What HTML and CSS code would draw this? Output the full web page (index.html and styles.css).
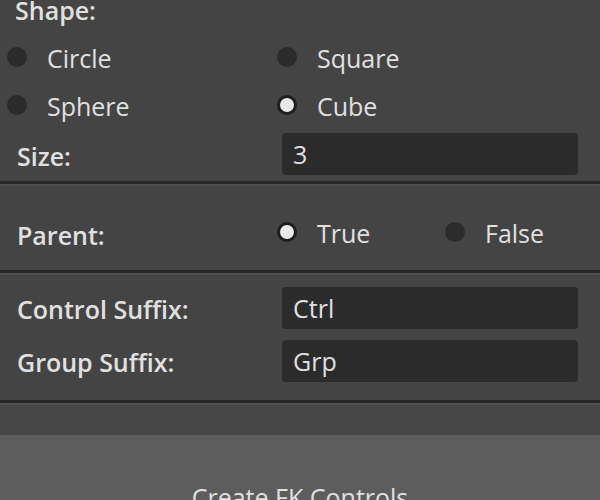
FILE: index.html
```html
<!DOCTYPE html>
<html lang="en">
<head>
  <meta charset="UTF-8" />
  <title>FK Controls</title>
  <link rel="stylesheet" href="styles.css">
</head>
<body>

  <div class="panel">
    <!-- Shape options -->
    <div class="section shape-section">
      <div class="title">Shape:</div>
      <div class="row">
        <label class="option"><span class="radio"></span>Circle</label>
        <label class="option"><span class="radio"></span>Square</label>
      </div>
      <div class="row">
        <label class="option"><span class="radio"></span>Sphere</label>
        <label class="option"><span class="radio on"></span>Cube</label>
      </div>
      <div class="row">
        <div class="label">Size:</div>
        <div class="field">3</div>
      </div>
    </div>

    <div class="separator"></div>

    <!-- Parent options -->
    <div class="section parent-section">
      <div class="row parent-row">
        <div class="label">Parent:</div>
        <label class="option"><span class="radio on"></span>True</label>
        <label class="option"><span class="radio"></span>False</label>
      </div>
    </div>

    <div class="separator"></div>

    <!-- Naming -->
    <div class="section suffix-section">
      <div class="row field-row">
        <div class="label">Control Suffix:</div>
        <div class="field">Ctrl</div>
      </div>
      <div class="row field-row">
        <div class="label">Group Suffix:</div>
        <div class="field">Grp</div>
      </div>
    </div>

    <div class="separator"></div>

    <div class="spacer"></div>
    <button class="create-btn">Create FK Controls</button>
  </div>

</body>
</html>
```

FILE: styles.css
```css
* {
  margin: 0;
  padding: 0;
  box-sizing: border-box;
}

body {
  background: #444444;
  color: #e0e0e0;
  font-family: 'Open Sans', 'Noto Sans', sans-serif;
  font-size: 25px;
  font-variant-ligatures: none;
  overflow: hidden;
}

.panel {
  margin-top: -7px;
}

.section {
  padding: 0 22px 0 7px;
}

.title {
  height: 34px;
  line-height: 34px;
  padding-left: 8px;
  font-weight: 600;
  margin-bottom: 7px;
}

.row {
  display: grid;
  grid-template-columns: 270px 1fr;
  align-items: center;
  height: 48px;
}

.label {
  padding-left: 10px;
  padding-top: 3px;
  font-weight: 600;
}

.option {
  display: flex;
  align-items: center;
  gap: 20px;
}

.radio {
  width: 20px;
  height: 20px;
  border-radius: 50%;
  background: #2b2b2b;
  flex-shrink: 0;
  margin-top: -3px;
}

.radio.on {
  background: #e8e8e8;
  border: 3px solid #1e1e1e;
}

.field {
  margin-left: 5px;
  height: 42px;
  line-height: 42px;
  padding-left: 11px;
  background: #2b2b2b;
  border-radius: 4px;
}

.separator {
  height: 5px;
  border-top: 3px solid #272727;
  border-bottom: 2px solid #505050;
}

.shape-section {
  padding-bottom: 3px;
}

.parent-section {
  padding-top: 23px;
  padding-bottom: 13px;
}

.parent-row {
  grid-template-columns: 270px 168px 1fr;
}

.suffix-section {
  padding-top: 11px;
  padding-bottom: 18px;
}

.field-row {
  height: 43px;
  margin-bottom: 10px;
}

.field-row:last-child {
  margin-bottom: 0;
}

.spacer {
  height: 30px;
  background: #474747;
}

.create-btn {
  display: block;
  width: 100%;
  height: 124px;
  border: none;
  background: #5d5d5d;
  color: #e0e0e0;
  font-family: inherit;
  font-size: 25px;
  font-variant-ligatures: none;
  cursor: pointer;
}
```
